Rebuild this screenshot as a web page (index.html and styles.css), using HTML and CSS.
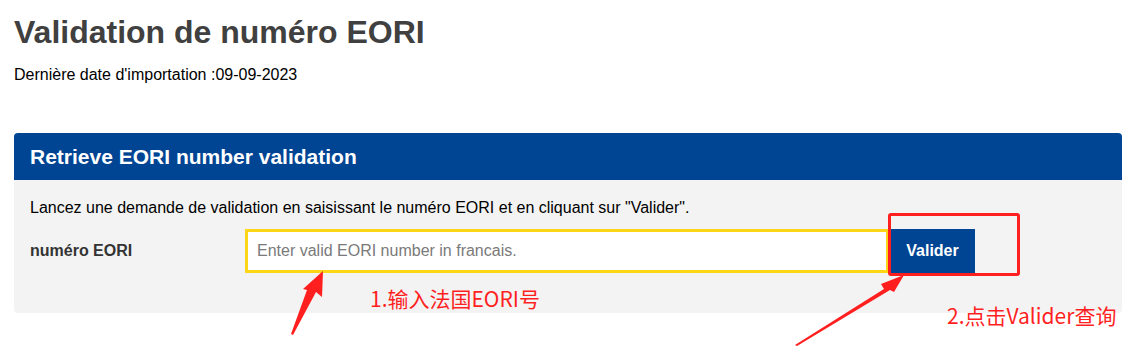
FILE: index.html
```html
<!DOCTYPE html>
<html lang="fr">
<head>
<meta charset="utf-8">
<title>Validation de numéro EORI</title>
<link rel="stylesheet" href="styles.css">
</head>
<body>
<div class="page">
  <h1 class="title">Validation de numéro EORI</h1>
  <p class="date">Dernière date d'importation :09-09-2023</p>

  <section class="card">
    <div class="card-header">Retrieve EORI number validation</div>
    <div class="card-body">
      <p class="intro">Lancez une demande de validation en saisissant le numéro EORI et en cliquant sur "Valider".</p>
      <div class="form-row">
        <label class="label" for="eori">numéro EORI</label>
        <input id="eori" class="input" type="text" placeholder="Enter valid EORI number in francais.">
        <button class="btn" type="button">Valider</button>
      </div>
    </div>
  </section>

  <div class="note-box"></div>
  <div class="note note-1">1.输入法国EORI号</div>
  <div class="note note-2">2.点击Valider查询</div>
  <svg class="arrows" width="1144" height="362" viewBox="0 0 1144 362">
    <polygon fill="#ff1f1f" points="291,334 307,290 303,289 323,271 322,297 316,292 293,335"/>
    <polygon fill="#ff1f1f" points="795,345 884,289 881,284 904,275 894,292 890,290 797,346"/>
  </svg>
</div>
</body>
</html>
```
FILE: styles.css
```css
html, body {
  margin: 0;
  padding: 0;
  background: #ffffff;
}

.page {
  position: relative;
  width: 1144px;
  height: 362px;
  padding: 13px 22px 0 14px;
  box-sizing: border-box;
  font-family: "Liberation Sans", Arial, sans-serif;
  overflow: hidden;
}

.title {
  margin: 0;
  font-size: 32px;
  line-height: 38px;
  font-weight: bold;
  color: #404040;
}

.date {
  margin: 14px 0 0 0;
  font-size: 16px;
  line-height: 20px;
  color: #000000;
}

.card {
  margin-top: 48px;
  border-radius: 4px;
  overflow: hidden;
  background: #f3f3f3;
}

.card-header {
  height: 47px;
  background: #004494;
  color: #ffffff;
  font-size: 21px;
  font-weight: bold;
  line-height: 47px;
  padding-left: 16px;
}

.card-body {
  padding: 18px 16px 40px 16px;
}

.intro {
  margin: 0;
  font-size: 16px;
  line-height: 20px;
  color: #000000;
}

.form-row {
  display: flex;
  align-items: center;
  margin-top: 11px;
}

.label {
  width: 215px;
  font-size: 16px;
  font-weight: bold;
  color: #333333;
}

.input {
  box-sizing: border-box;
  width: 644px;
  height: 44px;
  border: 3px solid #ffd617;
  background: #ffffff;
  padding: 0 9px;
  margin: 0;
  font-family: "Liberation Sans", Arial, sans-serif;
  font-size: 16px;
  color: #333333;
  outline: none;
}

.input::placeholder {
  color: #7a7a7a;
}

.btn {
  box-sizing: border-box;
  width: 85px;
  height: 44px;
  margin: 0 0 0 1px;
  border: none;
  background: #004494;
  color: #ffffff;
  font-family: "Liberation Sans", Arial, sans-serif;
  font-size: 16px;
  font-weight: bold;
}

.note-box {
  position: absolute;
  left: 888px;
  top: 213px;
  width: 132px;
  height: 63px;
  box-sizing: border-box;
  border: 3px solid #ff1f1f;
  border-radius: 3px;
}

.note {
  position: absolute;
  color: #ff1f1f;
  font-family: "Noto Sans CJK SC", "Liberation Sans", sans-serif;
  font-size: 21px;
  line-height: 24px;
  white-space: nowrap;
}

.note-1 {
  left: 370px;
  top: 286px;
}

.note-2 {
  left: 947px;
  top: 303px;
}

.arrows {
  position: absolute;
  left: 0;
  top: 0;
  pointer-events: none;
}
```
